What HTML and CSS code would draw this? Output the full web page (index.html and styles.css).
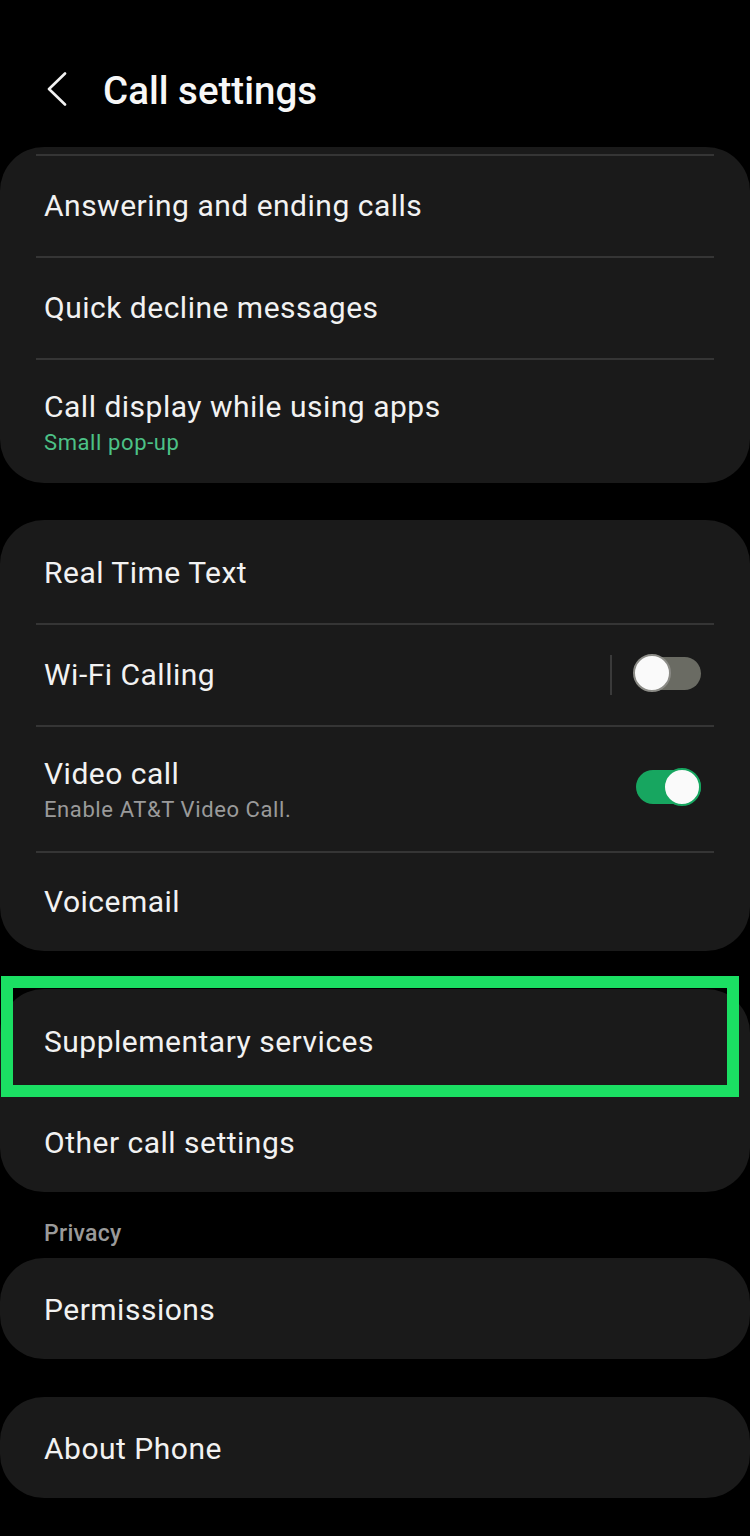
FILE: index.html
```html
<!DOCTYPE html>
<html lang="en">
<head>
<meta charset="utf-8">
<title>Call settings</title>
<link rel="stylesheet" href="styles.css">
</head>
<body>
<div class="screen">
  <header class="topbar">
    <span class="back">
      <svg width="22" height="34" viewBox="0 0 22 34"><path d="M19 1.5 L3 17 L19 32.5" fill="none" stroke="#f2f2f2" stroke-width="2.6" stroke-linecap="round" stroke-linejoin="round"/></svg>
    </span>
    <h1 class="title">Call settings</h1>
  </header>

  <section class="card card-first">
    <div class="sep"></div>
    <div class="row"><span class="label">Answering and ending calls</span></div>
    <div class="sep"></div>
    <div class="row"><span class="label">Quick decline messages</span></div>
    <div class="sep"></div>
    <div class="row row-two row-display">
      <div class="texts">
        <span class="label">Call display while using apps</span>
        <span class="sub sub-green">Small pop-up</span>
      </div>
    </div>
  </section>

  <section class="card card-second">
    <div class="row"><span class="label">Real Time Text</span></div>
    <div class="sep"></div>
    <div class="row">
      <span class="label">Wi-Fi Calling</span>
      <span class="vbar"></span>
      <span class="switch off"><span class="knob"></span></span>
    </div>
    <div class="sep"></div>
    <div class="row row-two row-video">
      <div class="texts">
        <span class="label">Video call</span>
        <span class="sub">Enable AT&amp;T Video Call.</span>
      </div>
      <span class="switch on"><span class="knob"></span></span>
    </div>
    <div class="sep"></div>
    <div class="row row-last"><span class="label">Voicemail</span></div>
  </section>

  <section class="card card-third">
    <div class="row"><span class="label">Supplementary services</span></div>
    <div class="sep"></div>
    <div class="row row-last"><span class="label">Other call settings</span></div>
    <div class="highlight"></div>
  </section>

  <div class="section-label">Privacy</div>

  <section class="card card-single">
    <div class="row row-single"><span class="label">Permissions</span></div>
  </section>

  <section class="card card-single card-about">
    <div class="row row-single"><span class="label">About Phone</span></div>
  </section>
</div>
</body>
</html>
```

FILE: styles.css
```css
html, body {
  margin: 0;
  padding: 0;
  background: #000;
}

body {
  font-family: Roboto, "Noto Sans", "Liberation Sans", sans-serif;
  color: #f2f2f2;
}

.screen {
  width: 750px;
  min-height: 1536px;
  display: flex;
  flex-direction: column;
}

.topbar {
  height: 147px;
  display: flex;
  align-items: flex-start;
  box-sizing: border-box;
  padding-top: 71px;
}

.back {
  width: 22px;
  height: 34px;
  margin-left: 46px;
  margin-top: 1px;
  display: block;
}

.back svg {
  display: block;
}

.title {
  margin: 0 0 0 35px;
  font-size: 38.5px;
  font-weight: 500;
  line-height: 40px;
  color: #f7f7f7;
}

.card {
  background: #1a1a1a;
  border-radius: 44px;
  display: flex;
  flex-direction: column;
  position: relative;
}

.card-first {
  padding-top: 7px;
}

.card-second {
  margin-top: 37px;
  padding-top: 3px;
}

.card-third {
  margin-top: 38px;
  padding-top: 3px;
}

.sep {
  height: 2px;
  margin: 0 36px;
  background: #353535;
}

.row {
  height: 100px;
  display: flex;
  align-items: center;
  padding: 0 49px 0 44px;
  box-sizing: border-box;
}

.row-last {
  height: 98px;
}

.row-display {
  height: 123px;
  padding-top: 2px;
}

.row-video {
  height: 124px;
  padding-top: 2px;
}

.row-single {
  height: 101px;
  padding-top: 3px;
}

.label {
  font-size: 30px;
  line-height: 36px;
  letter-spacing: 0.5px;
  color: #f2f2f2;
  flex: 1;
}

.texts {
  display: flex;
  flex-direction: column;
  flex: 1;
}

.texts .label {
  flex: none;
}

.sub {
  font-size: 22px;
  line-height: 28px;
  letter-spacing: 0.6px;
  margin-top: 4px;
  color: #9a9a9a;
}

.sub-green {
  color: #4cc187;
}

.vbar {
  width: 2px;
  height: 40px;
  background: #3a3a3a;
  margin-right: 22px;
}

.switch {
  width: 67px;
  height: 33px;
  border-radius: 17px;
  position: relative;
  flex: none;
}

.switch.off {
  background: #6a6b63;
  margin-bottom: 4px;
}

.switch.on {
  background: #17a660;
  width: 65px;
  height: 34px;
  margin-bottom: 6px;
}

.knob {
  position: absolute;
  top: 50%;
  width: 34px;
  height: 34px;
  margin-top: -19px;
  border-radius: 50%;
  background: #fafafa;
  border: 2px solid #8b8b86;
}

.switch.off .knob {
  left: -1px;
}

.switch.on .knob {
  right: 0;
  border-color: #17a660;
}

.highlight {
  position: absolute;
  top: -13px;
  left: 1px;
  width: 738px;
  height: 121px;
  box-sizing: border-box;
  border: 12px solid #1bdf63;
  pointer-events: none;
}

.section-label {
  margin: 27px 0 0 44px;
  height: 39px;
  font-size: 23px;
  font-weight: 500;
  line-height: 30px;
  letter-spacing: 0.3px;
  color: #9a9a9a;
}

.card-about {
  margin-top: 38px;
}
```
